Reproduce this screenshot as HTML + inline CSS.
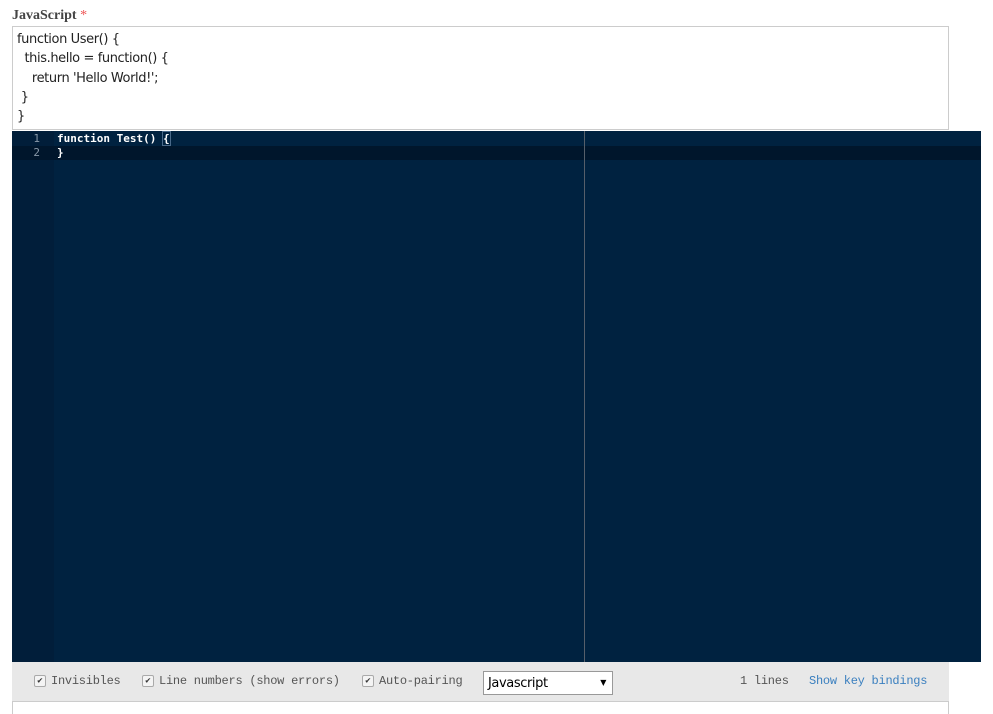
<!DOCTYPE html>
<html><head><style>
body{margin:0;background:#fff;width:993px;height:714px;overflow:hidden;position:relative;font-family:"Liberation Sans",sans-serif}
.lbl{position:absolute;left:12px;top:8px;font:bold 14px "Liberation Serif",serif;color:#444}
.lbl span{color:#e55;font-weight:normal}
.ta{position:absolute;left:12px;top:26px;width:937px;height:104px;border:1px solid #ccc;font:13px "DejaVu Sans","Liberation Sans",sans-serif;letter-spacing:-0.4px;color:#222;line-height:19.3px;padding:3px 0 0 4px;box-sizing:border-box;white-space:pre}
.ed{position:absolute;left:12px;top:131px;width:969px;height:531px;background:#002240}
.gut{position:absolute;left:0;top:0;width:42px;height:531px;background:#011e3a}
.act{position:absolute;left:0;top:15px;width:969px;height:14px;background:#00162c}
.pm{position:absolute;left:572px;top:0;width:1px;height:531px;background:#555f6a}
.ln{position:absolute;left:0;width:28px;text-align:right;font:11px "DejaVu Sans Mono",monospace;color:#8898a8}
.code{position:absolute;left:45px;font:bold 11px "DejaVu Sans Mono",monospace;color:#fff}
.bar{position:absolute;left:12px;top:662px;width:937px;height:40px;background:#e8e8e8;border-bottom:1px solid #ccc;box-sizing:border-box;font:12px "Liberation Mono",monospace;letter-spacing:-0.25px;color:#555}
.bar .it{position:absolute;top:12px}
.cb{display:inline-block;width:10px;height:10px;border:1px solid #aaa;border-radius:2px;background:#f4f4f4;font-size:9px;line-height:10px;text-align:center;vertical-align:1px;margin-right:5px;color:#333;letter-spacing:0}
.sel{position:absolute;left:471px;top:9px;width:130px;height:24px;border:1px solid #999;background:#fff;font:13px "DejaVu Sans",sans-serif;letter-spacing:-.4px;color:#000;box-sizing:border-box;padding:4px 4px}
.leftb{position:absolute;left:12px;top:702px;width:1px;height:12px;background:#ccc}
.rightb{position:absolute;left:948px;top:702px;width:1px;height:12px;background:#ccc}
</style></head><body>
<div class="lbl">JavaScript<span> *</span></div>
<div class="ta">function User() {
  this.hello = function() {
    return 'Hello World!';
 }
}</div>
<div class="ed">
<div class="gut"></div>
<div class="act"></div>
<div class="pm"></div>
<div class="ln" style="top:1px">1</div>
<div class="ln" style="top:15px">2</div>
<div class="code" style="top:1px">function Test() <span style="outline:1px solid #4a6a8a">{</span></div>
<div class="code" style="top:15px">}</div>
</div>
<div class="bar">
<div class="it" style="left:22px"><span class="cb">✔</span>Invisibles</div>
<div class="it" style="left:130px"><span class="cb">✔</span>Line numbers (show errors)</div>
<div class="it" style="left:350px"><span class="cb">✔</span>Auto-pairing</div>
<div class="sel">Javascript<span style="position:absolute;right:6px;top:6px;font-size:8px">▼</span></div>
<div class="it" style="left:728px">1 lines</div>
<div class="it" style="left:797px;color:#3a7fbf">Show key bindings</div>
</div>
<div class="leftb"></div><div class="rightb"></div>
</body></html>
